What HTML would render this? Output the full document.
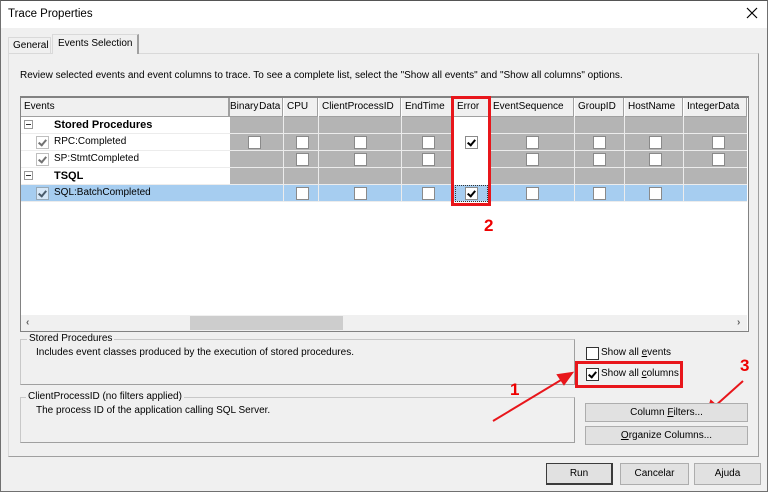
<!DOCTYPE html>
<html><head><style>
*{margin:0;padding:0;box-sizing:border-box}
body{width:768px;height:492px;background:#f0f0f0;font-family:"Liberation Sans",sans-serif;font-size:10px;color:#000;position:relative;overflow:hidden}
.a{position:absolute}
.t{position:absolute;white-space:nowrap;line-height:14px}
.cb{position:absolute;width:13px;height:13px;background:#fff;border:1px solid #333}
.cbg{position:absolute;width:13px;height:13px;background:#fff;border:1px solid #8a8a8a}
.btn{position:absolute;background:#e1e1e1;border:1px solid #adadad;text-align:center;line-height:18px}
.hd{position:absolute;top:98px;height:19px;background:#f0f0f0;border-right:1px solid #a0a0a0;border-bottom:1px solid #a0a0a0;line-height:18px;padding-left:3px;white-space:nowrap;overflow:hidden}
.chk::after{content:"";position:absolute;left:3px;top:1px;width:3px;height:6px;border:solid #000;border-width:0 2px 2px 0;transform:rotate(40deg)}
.red{position:absolute;color:#e00;font-weight:bold;font-size:17px}
</style></head><body>
<div class="a" style="left:0;top:0;width:768px;height:492px;border:1px solid #707070;border-top:1px solid #555"></div>
<div class="a" style="left:1px;top:1px;width:766px;height:27px;background:#fff"></div>
<div class="t" style="left:8px;top:7px;font-size:11.5px">Trace Properties</div>
<svg class="a" style="left:746px;top:7px" width="12" height="12"><path d="M1 1L11 11M11 1L1 11" stroke="#000" stroke-width="1.2"/></svg>
<div class="a" style="left:8px;top:53px;width:751px;height:404px;border:1px solid #d9d9d9;border-right-color:#a0a0a0;border-bottom-color:#a0a0a0;background:#f0f0f0"></div>
<div class="a" style="left:8px;top:37px;width:43px;height:17px;border:1px solid #d9d9d9;border-bottom:none"></div>
<div class="t" style="left:13px;top:39px">General</div>
<div class="a" style="left:52px;top:34px;width:87px;height:20px;border:1px solid #d9d9d9;border-right:2px solid #a0a0a0;border-bottom:none;background:#f0f0f0"></div>
<div class="t" style="left:58px;top:37px">Events Selection</div>
<div class="t" style="left:20px;top:69px">Review selected events and event columns to trace. To see a complete list, select the "Show all events" and "Show all columns" options.</div>
<div class="a" style="left:20px;top:96px;width:729px;height:236px;border:1px solid #828282;border-top:2px solid #828282;background:#fff"></div>
<div class="a" style="left:230px;top:117px;width:517px;height:68px;background:#b4b4b4"></div>
<div class="a" style="left:21px;top:185px;width:726px;height:17px;background:#a6cdf0"></div>
<div class="a" style="left:21px;top:133px;width:726px;height:1px;background:#ececec"></div>
<div class="a" style="left:21px;top:150px;width:726px;height:1px;background:#ececec"></div>
<div class="a" style="left:21px;top:167px;width:726px;height:1px;background:#ececec"></div>
<div class="a" style="left:21px;top:184px;width:726px;height:1px;background:#ececec"></div>
<div class="a" style="left:21px;top:201px;width:726px;height:1px;background:#ececec"></div>
<div class="a" style="left:283px;top:117px;width:1px;height:85px;background:#ececec"></div>
<div class="a" style="left:318px;top:117px;width:1px;height:85px;background:#ececec"></div>
<div class="a" style="left:401px;top:117px;width:1px;height:85px;background:#ececec"></div>
<div class="a" style="left:453px;top:117px;width:1px;height:85px;background:#ececec"></div>
<div class="a" style="left:489px;top:117px;width:1px;height:85px;background:#ececec"></div>
<div class="a" style="left:574px;top:117px;width:1px;height:85px;background:#ececec"></div>
<div class="a" style="left:624px;top:117px;width:1px;height:85px;background:#ececec"></div>
<div class="a" style="left:683px;top:117px;width:1px;height:85px;background:#ececec"></div>
<div class="a" style="left:454px;top:117px;width:35px;height:68px;background:#fff"></div>
<div class="hd" style="left:21px;width:209px;border-right:2px solid #a0a0a0">Events</div>
<div class="hd" style="left:230px;width:53px;padding-left:0">Binary&#8202;Data</div>
<div class="hd" style="left:284px;width:34px">CPU</div>
<div class="hd" style="left:319px;width:82px">ClientProcessID</div>
<div class="hd" style="left:402px;width:51px">EndTime</div>
<div class="hd" style="left:454px;width:35px">Error</div>
<div class="hd" style="left:490px;width:84px">EventSequence</div>
<div class="hd" style="left:575px;width:49px">GroupID</div>
<div class="hd" style="left:625px;width:58px">HostName</div>
<div class="hd" style="left:684px;width:63px">IntegerData</div>
<div class="a" style="left:24px;top:120px;width:9px;height:9px;border:1px solid #999;background:#fff"></div><div class="a" style="left:26px;top:124px;width:5px;height:1px;background:#333"></div>
<div class="t" style="left:54px;top:118px;font-weight:bold;font-size:11px">Stored Procedures</div>
<div class="cbg chk" style="left:36px;top:136px;opacity:.55"></div><div class="t" style="left:54px;top:135px">RPC:Completed</div>
<div class="cbg chk" style="left:36px;top:153px;opacity:.55"></div><div class="t" style="left:54px;top:152px">SP:StmtCompleted</div>
<div class="a" style="left:24px;top:171px;width:9px;height:9px;border:1px solid #999;background:#fff"></div><div class="a" style="left:26px;top:175px;width:5px;height:1px;background:#333"></div>
<div class="t" style="left:54px;top:169px;font-weight:bold;font-size:11px">TSQL</div>
<div class="cbg chk" style="left:36px;top:187px;opacity:.55"></div><div class="t" style="left:54px;top:186px">SQL:BatchCompleted</div>
<div class="cbg" style="left:248px;top:136px"></div>
<div class="cbg" style="left:296px;top:136px"></div><div class="cbg" style="left:296px;top:153px"></div><div class="cbg" style="left:296px;top:187px"></div>
<div class="cbg" style="left:354px;top:136px"></div><div class="cbg" style="left:354px;top:153px"></div><div class="cbg" style="left:354px;top:187px"></div>
<div class="cbg" style="left:422px;top:136px"></div><div class="cbg" style="left:422px;top:153px"></div><div class="cbg" style="left:422px;top:187px"></div>
<div class="cbg chk" style="left:465px;top:136px"></div>
<div class="a" style="left:455px;top:185px;width:33px;height:17px;border:1px dotted #333"></div>
<div class="cbg chk" style="left:465px;top:187px"></div>
<div class="cbg" style="left:526px;top:136px"></div><div class="cbg" style="left:526px;top:153px"></div><div class="cbg" style="left:526px;top:187px"></div>
<div class="cbg" style="left:593px;top:136px"></div><div class="cbg" style="left:593px;top:153px"></div><div class="cbg" style="left:593px;top:187px"></div>
<div class="cbg" style="left:649px;top:136px"></div><div class="cbg" style="left:649px;top:153px"></div><div class="cbg" style="left:649px;top:187px"></div>
<div class="cbg" style="left:712px;top:136px"></div><div class="cbg" style="left:712px;top:153px"></div>
<div class="a" style="left:451px;top:96px;width:40px;height:110px;border:3px solid #e8161b"></div>
<div class="red" style="left:484px;top:216px">2</div>
<div class="a" style="left:21px;top:315px;width:726px;height:16px;background:#f0f0f0"></div>
<div class="a" style="left:190px;top:316px;width:153px;height:14px;background:#cdcdcd"></div>
<div class="t" style="left:26px;top:316px;color:#606060;font-weight:bold">&#8249;</div>
<div class="t" style="left:737px;top:316px;color:#606060;font-weight:bold">&#8250;</div>
<div class="a" style="left:20px;top:339px;width:555px;height:46px;border:1px solid #c8c8c8;border-right-color:#a0a0a0;border-bottom-color:#a0a0a0"></div>
<div class="t" style="left:27px;top:332px;background:#f0f0f0;padding:0 2px">Stored Procedures</div>
<div class="t" style="left:36px;top:346px">Includes event classes produced by the execution of stored procedures.</div>
<div class="a" style="left:20px;top:397px;width:555px;height:46px;border:1px solid #c8c8c8;border-right-color:#a0a0a0;border-bottom-color:#a0a0a0"></div>
<div class="t" style="left:26px;top:390px;background:#f0f0f0;padding:0 2px">ClientProcessID (no filters applied)</div>
<div class="t" style="left:36px;top:404px">The process ID of the application calling SQL Server.</div>
<div class="cb" style="left:586px;top:347px"></div><div class="t" style="left:601px;top:346px">Show all <u>e</u>vents</div>
<div class="cb chk" style="left:586px;top:368px"></div><div class="t" style="left:601px;top:367px">Show all <u>c</u>olumns</div>
<div class="a" style="left:575px;top:361px;width:108px;height:27px;border:3px solid #e8161b"></div>
<div class="red" style="left:510px;top:380px">1</div>
<div class="red" style="left:740px;top:356px">3</div>
<svg class="a" style="left:0;top:0" width="768" height="492"><g stroke="#e8161b" stroke-width="2" fill="#e8161b"><line x1="493" y1="421" x2="566" y2="377"/><path d="M572 373L558 375L564 384Z"/><line x1="743" y1="381" x2="714" y2="407"/><path d="M707 414L711 401L720 409Z"/></g></svg>
<div class="btn" style="left:585px;top:403px;width:163px;height:19px">Column <u>F</u>ilters...</div>
<div class="btn" style="left:585px;top:426px;width:163px;height:19px"><u>O</u>rganize Columns...</div>
<div class="btn" style="left:546px;top:463px;width:67px;height:22px;line-height:20px;border:2px solid #3c3c3c;border-width:1px 2px 2px 1px">Run</div>
<div class="btn" style="left:620px;top:463px;width:69px;height:22px;line-height:20px">Cancelar</div>
<div class="btn" style="left:694px;top:463px;width:67px;height:22px;line-height:20px">Ajuda</div>
</body></html>
